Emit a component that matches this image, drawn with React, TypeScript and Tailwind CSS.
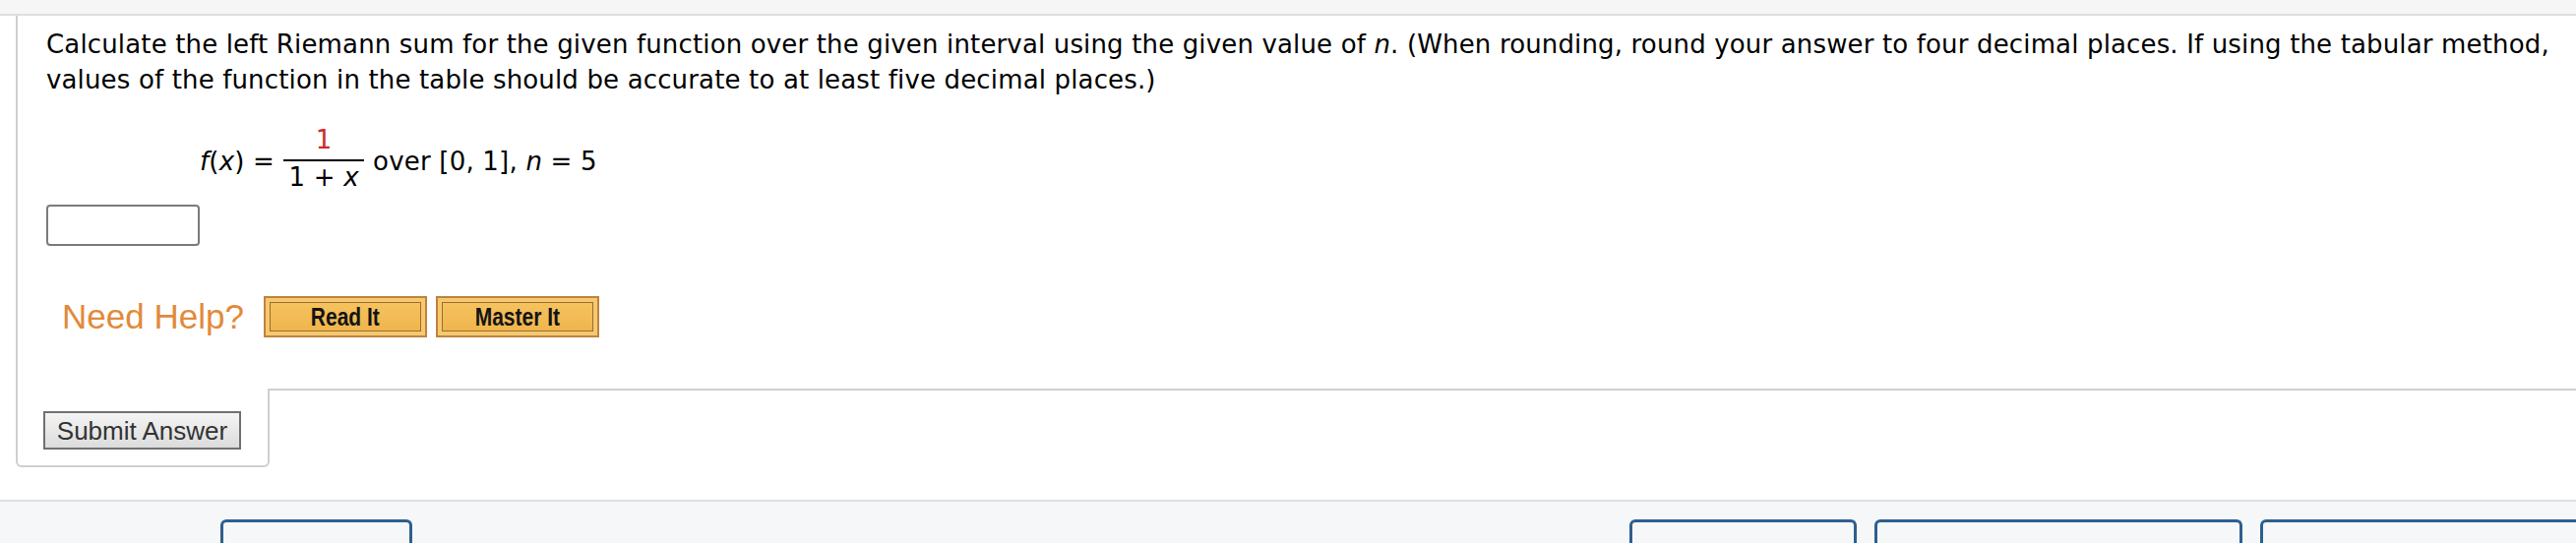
const body = "font-['DejaVu_Sans',Verdana,sans-serif]";
const arial = "font-['Liberation_Sans',Arial,sans-serif]";

function HelpButton({ label }: { label: string }) {
  return (
    <div className="h-[42px] w-[166px] border-2 border-[#c08240] bg-[#f6c96f] p-[4px]">
      <div
        className={`flex h-full w-full items-center justify-center border-[1.5px] border-[#9c6c30] bg-gradient-to-b from-[#f5c35f] to-[#efb54c] text-[#141414] ${arial}`}
      >
        <span className="inline-block scale-y-[1.2] text-[21px] font-bold leading-none">{label}</span>
      </div>
    </div>
  );
}

const tab = 'h-[40px] shrink-0 rounded-t-[6px] border-[3px] border-b-0 border-[#2d5f8e]';

export default function App() {
  return (
    <div className={`h-[552px] w-[2618px] overflow-hidden bg-white text-black ${body}`}>
      <div className="h-[16px] border-b-2 border-[#dedede] bg-[#f6f6f6]" />

      <div className="ml-[16px] border-l-2 border-[#cfcfcf] pb-[52px] pl-[29px] pr-[4px] pt-[11px]">
        <p className="text-[26px] leading-[36px] tracking-[0.15px]">
          Calculate the left Riemann sum for the given function over the given interval using the given value of{' '}
          <i>n</i>. (When rounding, round your answer to four decimal places. If using the tabular method, values of
          the function in the table should be accurate to at least five decimal places.)
        </p>

        <div className="ml-[156px] mt-[31px] flex items-center text-[26px] tracking-[0.2px]">
          <span className="pt-[5px] leading-[25px]">
            <i>f</i>(<i>x</i>) =
          </span>
          <span className="mx-[9px] inline-flex flex-col items-center">
            <span className="pb-[7px] leading-[25px] text-[#d12a2a]">1</span>
            <span className="h-[2px] w-[82px] bg-black" />
            <span className="pt-[4px] leading-[25px]">
              1 + <i>x</i>
            </span>
          </span>
          <span className="pt-[5px] leading-[25px]">
            over [0, 1], <i>n</i> = 5
          </span>
        </div>

        <input
          type="text"
          className="mt-[15px] block h-[42px] w-[156px] rounded-[4px] border-2 border-[#7b7b7b] bg-white outline-none"
        />

        <div className="mt-[51px] flex items-center">
          <span className={`ml-[16px] mr-[20px] text-[35px] leading-[42px] text-[#e3893a] ${arial}`}>Need Help?</span>
          <div className="flex gap-[9px]">
            <HelpButton label="Read It" />
            <HelpButton label="Master It" />
          </div>
        </div>
      </div>

      <div className="flex">
        <div className="ml-[16px] w-[258px] rounded-b-[6px] border-2 border-t-0 border-[#cfcfcf] pb-[16px] pl-[26px] pt-[23px]">
          <button
            type="button"
            className={`h-[39px] w-[201px] border-2 border-[#707070] bg-gradient-to-b from-[#f4f4f4] to-[#dcdcdc] text-[26px] leading-none text-[#333333] ${arial}`}
          >
            Submit Answer
          </button>
        </div>
        <div className="flex-1 border-t-2 border-[#cfcfcf]" />
      </div>

      <div className="mt-[33px] h-[100px] border-t-2 border-[#dedede] bg-[#f6f7f8] pt-[18px]">
        <div className="flex">
          <div className={`ml-[224px] w-[195px] ${tab}`} />
          <div className={`ml-[1237px] w-[231px] ${tab}`} />
          <div className={`ml-[18px] w-[374px] ${tab}`} />
          <div className={`ml-[18px] w-[400px] ${tab}`} />
        </div>
      </div>
    </div>
  );
}
